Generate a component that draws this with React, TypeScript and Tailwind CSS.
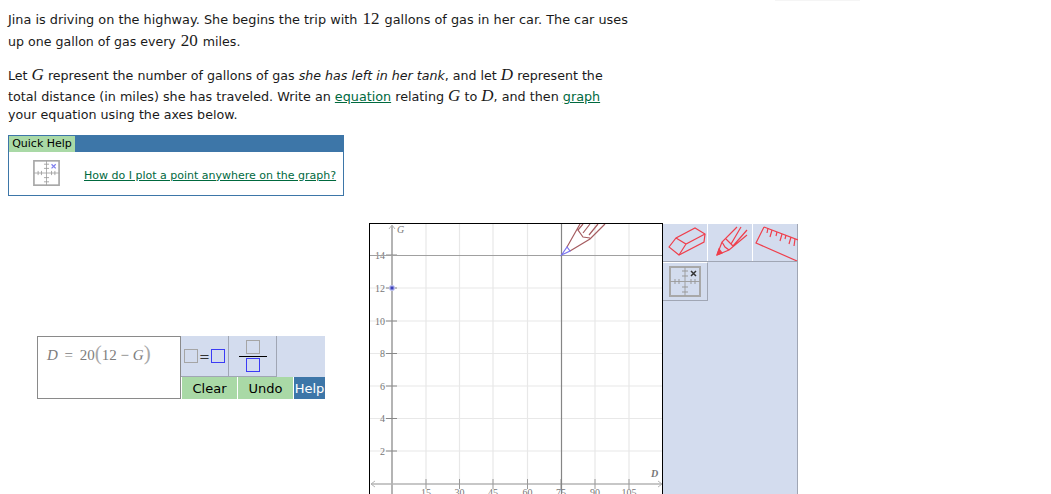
const BODY = 'font-["DejaVu_Sans",Verdana,sans-serif]';
const MATH = 'font-["Liberation_Serif",serif] text-[17px] mx-[1px]';
const VAR = 'font-["Liberation_Serif",serif] text-[17px] italic';

const GRID_X = [426, 459.5, 493, 527.5, 595, 629];
const GRID_Y = [288, 321, 353.5, 386, 418.5, 451];
const Y_LABELS = [
  { y: 255, t: '14' }, { y: 288, t: '12' }, { y: 321, t: '10' }, { y: 353.5, t: '8' },
  { y: 386, t: '6' }, { y: 418.5, t: '4' }, { y: 451, t: '2' },
];
const X_LABELS = [
  { x: 426, t: '15' }, { x: 459.5, t: '30' }, { x: 493, t: '45' }, { x: 527.5, t: '60' },
  { x: 561, t: '75' }, { x: 595, t: '90' }, { x: 629, t: '105' },
];

function Graph() {
  return (
    <svg width={294} height={271} viewBox="369 223 294 271" className="block shrink-0">
      <rect x={369} y={223} width={294} height={271} fill="#fff" />
      {GRID_X.map(x => <line key={x} x1={x} x2={x} y1={224} y2={484} stroke="#e8e8e8" strokeWidth={1.2} />)}
      {GRID_Y.map(y => <line key={y} x1={370} x2={662} y1={y} y2={y} stroke="#e8e8e8" strokeWidth={1.2} />)}

      <line x1={392} x2={392} y1={226} y2={494} stroke="#b4b4b4" strokeWidth={2} />
      <line x1={371} x2={662} y1={484} y2={484} stroke="#b4b4b4" strokeWidth={1.5} />
      <path d="M389 229l3-4 3 4" fill="none" stroke="#b4b4b4" />
      <path d="M375 481l-4 3 4 3M658 481l4 3-4 3" fill="none" stroke="#b4b4b4" />

      {Y_LABELS.map(l => (
        <g key={l.t}>
          <line x1={386} x2={397} y1={l.y} y2={l.y} stroke="#888" />
          <text x={385} y={l.y + 3.5} textAnchor="end" fontSize={10} fontFamily="Liberation Serif" fill="#777">{l.t}</text>
        </g>
      ))}
      {X_LABELS.map(l => (
        <g key={l.t}>
          <line x1={l.x} x2={l.x} y1={479} y2={489} stroke="#999" />
          <text x={l.x} y={496} textAnchor="middle" fontSize={10} fontFamily="Liberation Serif" fill="#777">{l.t}</text>
        </g>
      ))}
      <text x={397} y={233} fontSize={10} fontStyle="italic" fontFamily="Liberation Serif" fill="#777">G</text>
      <text x={651} y={477} fontSize={10} fontStyle="italic" fontWeight="bold" fontFamily="Liberation Serif" fill="#777">D</text>

      {/* crosshair following the pencil */}
      <line x1={370} x2={662} y1={255.5} y2={255.5} stroke="#a0a0a0" strokeWidth={1.2} />
      <line x1={561.5} x2={561.5} y1={224} y2={494} stroke="#858585" strokeWidth={1.2} />

      <circle cx={392} cy={288} r={3} fill="#b9bdf0" />
      <rect x={390.5} y={286.5} width={3} height={3} fill="#3b3fb8" />

      <g fill="none">
        <path d="M567 247L580 224M570 251L590 239L605 224M583 224L578 230L583 237L590 238M590 224L583 233M598 224L589 235" stroke="#a55c60" strokeWidth={1.2} />
        <path d="M561.5 255L567 247L570 251Z" stroke="#7b74ee" strokeWidth={1.2} />
      </g>

      <rect x={369.5} y={223.5} width={293} height={272} fill="none" stroke="#000" />
    </svg>
  );
}

function Eraser() {
  return (
    <svg width={44} height={37} viewBox="0 0 44 37" fill="none" stroke="#ef3f4c" strokeWidth={1.2}>
      <path d="M6 23L13 14L32 4L42 10L41 18L16 31Z" />
      <path d="M13 14L23 20L42 10M23 20L16 31" />
    </svg>
  );
}

function Pencil() {
  return (
    <svg width={44} height={37} viewBox="0 0 44 37" fill="none" stroke="#ef3f4c" strokeWidth={1.2}>
      <path d="M9 31L14 18L29 3M9 31L21 26L39 11M14 18L17 23L21 26M18 15L23 20L33 3M23 20L25 22L39 6" />
      <path d="M9 31L11 25L14 29Z" fill="#ef3f4c" />
    </svg>
  );
}

function Ruler() {
  return (
    <svg width={45} height={37} viewBox="0 0 45 37" fill="none" stroke="#ef3f4c" strokeWidth={1.2}>
      <path d="M11 3L45 16M11 3L3 19L44 37" />
      <path d="M15 4L14 9M19 6L17 13M24 8L23 12M29 10L27 17M33 11L32 15M38 13L36 20M42 15L41 22" />
    </svg>
  );
}

function GridIcon({ mark, size, fill }: { mark: string; size: number; fill: string }) {
  return (
    <svg width={size} height={size - 1} viewBox="0 0 32 31" fill="none" className="shrink-0">
      <rect x={1} y={1} width={30} height={29} stroke="#a8a8a8" strokeWidth={2} fill={fill} />
      <path d="M16 1V30M1 15.5H31" stroke="#a0a0a0" />
      <path d="M13 5H19M13 10H19M13 21H19M13 26H19M6 13V18M10 13V18M22 13V18M26 13V18" stroke="#999" />
      <path d="M22 5L27 10M27 5L22 10" stroke={mark} strokeWidth={1.5} />
    </svg>
  );
}

export default function App() {
  return (
    <div className={`h-[494px] w-[1051px] overflow-hidden bg-white text-[12.7px] text-[#1a1a1a] ${BODY}`}>
      <div className="ml-[775px] h-px w-[85px] bg-[#f5f5f5]" />
      <div className="pl-2 pt-[7px]">
        <div className="flex h-[22px] items-center text-[12.85px]">
          <span className="whitespace-pre">Jina is driving on the highway. She begins the trip with <span className={MATH}>12</span> gallons of gas in her car. The car uses</span>
        </div>
        <div className="flex h-[22px] items-center text-[12.6px]">
          <span className="whitespace-pre">up one gallon of gas every <span className={MATH}>20</span> miles.</span>
        </div>
        <div className="mt-3 flex h-[22px] items-center text-[12.65px]">
          <span className="whitespace-pre">Let <span className={VAR}>G</span> represent the number of gallons of gas <em>she has left in her tank</em>, and let <span className={VAR}>D</span> represent the</span>
        </div>
        <div className="flex h-5 items-center text-[12.75px]">
          <span className="whitespace-pre">total distance (in miles) she has traveled. Write an <a className="text-[#00693e] underline">equation</a> relating <span className={VAR}>G</span> to <span className={VAR}>D</span>, and then <a className="text-[#00693e] underline">graph</a></span>
        </div>
        <div className="flex h-[17px] items-center">your equation using the axes below.</div>

        <div className="mt-3 h-[61px] w-[336px] border border-[#3d76a8]">
          <div className="h-4 bg-[#3d76a8]">
            <div className="flex h-4 w-[66px] items-center justify-center bg-[#a9d9a6] text-[11px] text-black">Quick Help</div>
          </div>
          <div className="flex items-center pl-6 pt-2">
            <GridIcon mark="#8080ee" size={27} fill="#ffffff" />
            <a className="ml-6 mt-[6px] text-[11px] whitespace-nowrap text-[#00693e] underline">How do I plot a point anywhere on the graph?</a>
          </div>
        </div>
      </div>

      <div className="mt-[27px] flex pl-[37px]">
        <div className="mt-[113px] flex h-[63px] w-[288px] shrink-0">
          <div className="h-[63px] w-[144px] border border-[#8a8a8a] pl-[9px] pt-1 font-['Liberation_Serif',serif] text-[15px] leading-6 text-[#7d7d7d]">
            <i>D</i> <span className="mx-[3px]">=</span> 20<span className="text-[21px] font-light text-[#a8a8a8]">(</span>12 − <i>G</i><span className="text-[21px] font-light text-[#a8a8a8]">)</span>
          </div>
          <div className="w-[144px]">
            <div className="flex h-[41px] bg-[#d3dcee]">
              <div className="flex h-[41px] w-[48px] items-center gap-[1px] border-r border-b border-[#a0a6b4] pl-[3px]">
                <span className="h-[14px] w-[14px] border border-[#a5a5a5]" />
                <span className="text-[13px] leading-none text-[#333]">=</span>
                <span className="h-[14px] w-[14px] border border-[#3b3bf5]" />
              </div>
              <div className="flex h-[41px] w-[48px] flex-col items-center justify-center border-r border-b border-[#a0a6b4]">
                <span className="h-[14px] w-[14px] border border-[#a5a5a5]" />
                <span className="my-[1.5px] h-px w-[28px] bg-black" />
                <span className="h-[14px] w-[14px] border border-[#3b3bf5]" />
              </div>
            </div>
            <div className="flex h-[22px] gap-px pl-px text-[13px] text-black">
              <div className="flex w-[55px] items-center justify-center bg-[#a9d9a6] pt-px">Clear</div>
              <div className="flex w-[55px] items-center justify-center bg-[#a9d9a6] pt-px">Undo</div>
              <div className="flex w-[31px] items-center justify-center bg-[#3d76a8] pt-px text-white">Help</div>
            </div>
          </div>
        </div>

        <div className="ml-[44px] shrink-0"><Graph /></div>

        <div className="mt-px h-[270px] w-[135px] shrink-0 border-r border-[#a0a6b4] bg-[#d3dcee]">
          <div className="flex h-[38px] border-b border-[#a0a6b4]">
            <div className="flex w-[45px] justify-center border-r border-white"><Eraser /></div>
            <div className="flex w-[45px] justify-center border-r border-white"><Pencil /></div>
            <div className="flex flex-1 justify-center"><Ruler /></div>
          </div>
          <div className="flex h-[39px] w-[45px] items-center justify-center border-r border-b border-t border-[#a0a6b4] border-t-white">
            <GridIcon mark="#333333" size={32} fill="#d3dcee" />
          </div>
        </div>
      </div>
    </div>
  );
}
